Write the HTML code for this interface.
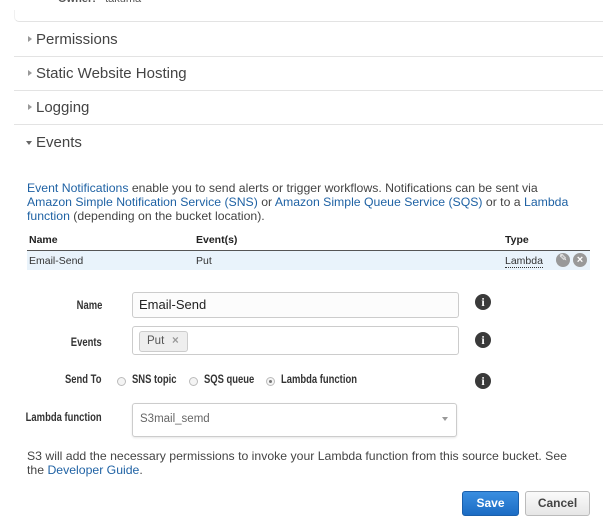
<!DOCTYPE html>
<html><head><style>
*{margin:0;padding:0;box-sizing:border-box}
body{width:603px;height:518px;background:#fff;font-family:"Liberation Sans",sans-serif;color:#333;position:relative;overflow:hidden}
.a{position:absolute;white-space:nowrap}
.sep{position:absolute;left:14px;right:0;height:1px;background:#e3e3e3}
.h{position:absolute;left:36px;font-size:15px;color:#444}
.tri{position:absolute;left:28px;width:0;height:0;border-top:3px solid transparent;border-bottom:3px solid transparent;border-left:4px solid #999}
a{color:#1f62a4;text-decoration:none}
.lbl{position:absolute;right:501px;font-size:11.5px;font-weight:bold;color:#333;white-space:nowrap;transform:scaleX(0.82);transform-origin:right center}
.inp{position:absolute;border:1px solid #ccc;border-radius:3px;background:#fff}
.info{position:absolute;width:16px;height:16px;border-radius:50%;background:#3a3a3a;color:#fff;font-size:12px;font-weight:bold;text-align:center;line-height:16px;font-family:"Liberation Serif",serif}
.rad{position:absolute;width:9px;height:9px;border-radius:50%;border:1px solid #bbb;background:#f4f4f4}
.rl{position:absolute;font-size:11.5px;font-weight:bold;color:#333;white-space:nowrap;transform:scaleX(0.82);transform-origin:left center}
</style></head><body>
<div class="a" style="left:58px;top:-7px;font-size:11px;color:#555"><b>Owner:</b>&nbsp;&nbsp; takuma</div>
<div style="position:absolute;left:14px;right:0;top:10px;height:12px;border-bottom:1px solid #e3e3e3;border-left:1px solid #f0f0f0;border-radius:0 0 0 5px"></div>
<div class="tri" style="top:36px"></div><div class="h" style="top:31px">Permissions</div>
<div class="sep" style="top:56px"></div>
<div class="tri" style="top:70px"></div><div class="h" style="top:65px">Static Website Hosting</div>
<div class="sep" style="top:90px"></div>
<div class="tri" style="top:104px"></div><div class="h" style="top:99px">Logging</div>
<div class="sep" style="top:124px"></div>
<div style="position:absolute;left:26px;top:141px;border-left:3px solid transparent;border-right:3px solid transparent;border-top:4px solid #666"></div>
<div class="h" style="top:134px">Events</div>
<div class="a" style="left:27px;top:181px;font-size:12.25px;line-height:14px;color:#444">
<a>Event Notifications</a> enable you to send alerts or trigger workflows. Notifications can be sent via<br>
<a>Amazon Simple Notification Service (SNS)</a> or <a>Amazon Simple Queue Service (SQS)</a> or to a <a>Lambda</a><br>
<a>function</a> (depending on the bucket location).</div>
<div class="a" style="left:29px;top:234px;font-size:10.5px;font-weight:bold;color:#222">Name</div>
<div class="a" style="left:196px;top:234px;font-size:10.5px;font-weight:bold;color:#222">Event(s)</div>
<div class="a" style="left:505px;top:234px;font-size:10.5px;font-weight:bold;color:#222">Type</div>
<div style="position:absolute;left:27px;top:250px;width:563px;height:1px;background:#555"></div>
<div style="position:absolute;left:27px;top:251px;width:563px;height:19px;background:#e9f3fb"></div>
<div class="a" style="left:29px;top:255px;font-size:10.5px">Email-Send</div>
<div class="a" style="left:196px;top:255px;font-size:10.5px">Put</div>
<div class="a" style="left:505px;top:255px;font-size:10.5px;border-bottom:1px dotted #333">Lambda</div>
<div style="position:absolute;left:556px;top:253px;width:14px;height:14px;border-radius:50%;background:#999"></div>
<div class="a" style="left:559px;top:253px;font-size:10px;color:#fff">✎</div>
<div style="position:absolute;left:573px;top:253px;width:14px;height:14px;border-radius:50%;background:#999;color:#fff;font-size:11px;font-weight:bold;text-align:center;line-height:14px">×</div>

<div class="lbl" style="top:300px">Name</div>
<div class="inp" style="left:132px;top:292px;width:327px;height:26px;background:#fcfcfc"></div>
<div class="a" style="left:139px;top:297px;font-size:13px;color:#222">Email-Send</div>
<div class="info" style="left:475px;top:294px">i</div>
<div class="lbl" style="top:337px">Events</div>
<div class="inp" style="left:132px;top:326px;width:327px;height:29px"></div>
<div style="position:absolute;left:139px;top:331px;width:49px;height:21px;border:1px solid #ccc;border-radius:3px;background:#eee"></div>
<div class="a" style="left:147px;top:335px;font-size:11.5px;color:#555">Put</div>
<div class="a" style="left:172px;top:335px;font-size:11.5px;color:#999;font-weight:bold">×</div>
<div class="info" style="left:475px;top:332px">i</div>
<div class="lbl" style="top:374px">Send To</div>
<div class="rad" style="left:117px;top:377px"></div>
<div class="rl" style="left:132px;top:374px">SNS topic</div>
<div class="rad" style="left:189px;top:377px"></div>
<div class="rl" style="left:204px;top:374px">SQS queue</div>
<div class="rad" style="left:266px;top:377px"></div>
<div class="rl" style="left:281px;top:374px">Lambda function</div>
<div style="position:absolute;left:269px;top:380px;width:3px;height:3px;border-radius:50%;background:#777"></div>
<div class="info" style="left:475px;top:373px">i</div>
<div class="lbl" style="top:412px">Lambda function</div>
<div class="inp" style="left:132px;top:403px;width:325px;height:34px;box-shadow:0 1px 2px rgba(0,0,0,.1)"></div>
<div class="a" style="left:140px;top:413px;font-size:11.5px;color:#666">S3mail_semd</div>
<div style="position:absolute;left:442px;top:417px;border-left:3px solid transparent;border-right:3px solid transparent;border-top:4px solid #999"></div>
<div class="a" style="left:27px;top:449px;font-size:12.25px;line-height:14px;color:#444">S3 will add the necessary permissions to invoke your Lambda function from this source bucket. See<br>the <a>Developer Guide</a>.</div>
<div style="position:absolute;left:462px;top:491px;width:57px;height:25px;border-radius:3px;background:linear-gradient(#3a8ee0,#1b6cc4);border:1px solid #1a5fab;color:#fff;font-size:12px;font-weight:bold;text-align:center;line-height:23px">Save</div>
<div style="position:absolute;left:525px;top:491px;width:65px;height:25px;border-radius:3px;background:linear-gradient(#fafafa,#e6e6e6);border:1px solid #bbb;color:#444;font-size:12px;font-weight:bold;text-align:center;line-height:23px">Cancel</div>
</body></html>
